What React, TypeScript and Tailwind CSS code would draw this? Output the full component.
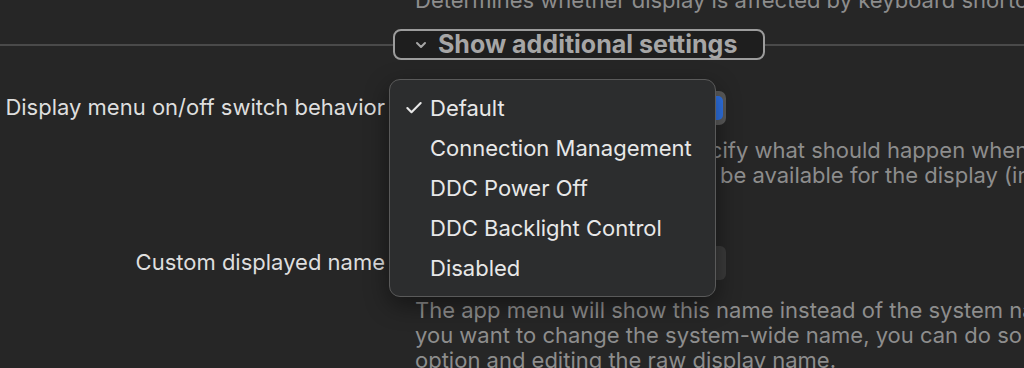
import { Check, ChevronDown } from "lucide-react";

const menuItems = [
  "Default",
  "Connection Management",
  "DDC Power Off",
  "DDC Backlight Control",
  "Disabled",
];

export default function App() {
  return (
    <div
      className="relative h-[368px] w-[1024px] overflow-hidden bg-[#262626] text-[22px] leading-[25px]"
      style={{ fontFamily: "Inter, 'Noto Sans', sans-serif" }}
    >
      <div className="-mt-[12px] pl-[415px] whitespace-nowrap text-[#8d8d8d]">
        Determines whether display is affected by keyboard shortcuts and media keys.
      </div>

      {/* divider with disclosure button */}
      <div className="mt-[16px] flex items-center">
        <div className="h-[2px] w-[393px] bg-[#4a4a4a]" />
        <button className="flex h-[31px] w-[372px] items-center gap-[9px] rounded-[8px] border-2 border-[#9c9c9c] bg-[#1e1e1e] pl-[18px] text-[25px] font-bold text-[#a6a6a6]">
          <ChevronDown className="h-[16px] w-[16px]" strokeWidth={3} />
          Show additional settings
        </button>
        <div className="h-[2px] flex-1 bg-[#4a4a4a]" />
      </div>

      <div className="mt-[31px] grid grid-cols-[385px_1fr] gap-x-[24px]">
        <div className="pt-[4px] text-right whitespace-nowrap text-[#dedede]">
          Display menu on/off switch behavior
        </div>
        <div>
          <div className="flex h-[34px] w-[317px] items-center justify-end rounded-[7px] bg-[#5b5b5b] pr-[3px]">
            <div className="h-[24px] w-[9px] rounded-r-[5px] bg-[#2f73e6]" />
          </div>
          <div className="mt-[13px] pl-[6px] whitespace-nowrap text-[#8d8d8d]">
            <div>With this option you can specify what should happen when the display menu is switched on or off.</div>
            <div>Some of the options may not be available for the display (in case DDC is not supported).</div>
          </div>
        </div>

        <div className="mt-[58px] pt-[4px] text-right whitespace-nowrap text-[#dedede]">
          Custom displayed name
        </div>
        <div className="mt-[58px]">
          <div className="h-[34px] w-[317px] rounded-[6px] bg-[#3a3a3a]" />
          <div className="mt-[18px] pl-[6px] whitespace-nowrap text-[#8d8d8d]">
            <div>The app menu will show this name instead of the system name. If</div>
            <div>you want to change the system-wide name, you can do so by holding the</div>
            <div>option and editing the raw display name.</div>
          </div>
        </div>
      </div>

      {/* open pop-up menu */}
      <div className="absolute left-[389px] top-[79px] w-[327px] rounded-[11px] border border-[#5a5a5a] bg-[#2c2d2e] py-[8px] shadow-[0_8px_24px_rgba(0,0,0,0.45)]">
        {menuItems.map((item, i) => (
          <div key={item} className="flex h-[40px] items-center text-[22px] text-[#e8e8e8]">
            <div className="flex w-[40px] justify-end pr-[6px]">
              {i === 0 && <Check className="h-[20px] w-[20px]" strokeWidth={2.5} />}
            </div>
            <span>{item}</span>
          </div>
        ))}
      </div>
    </div>
  );
}
